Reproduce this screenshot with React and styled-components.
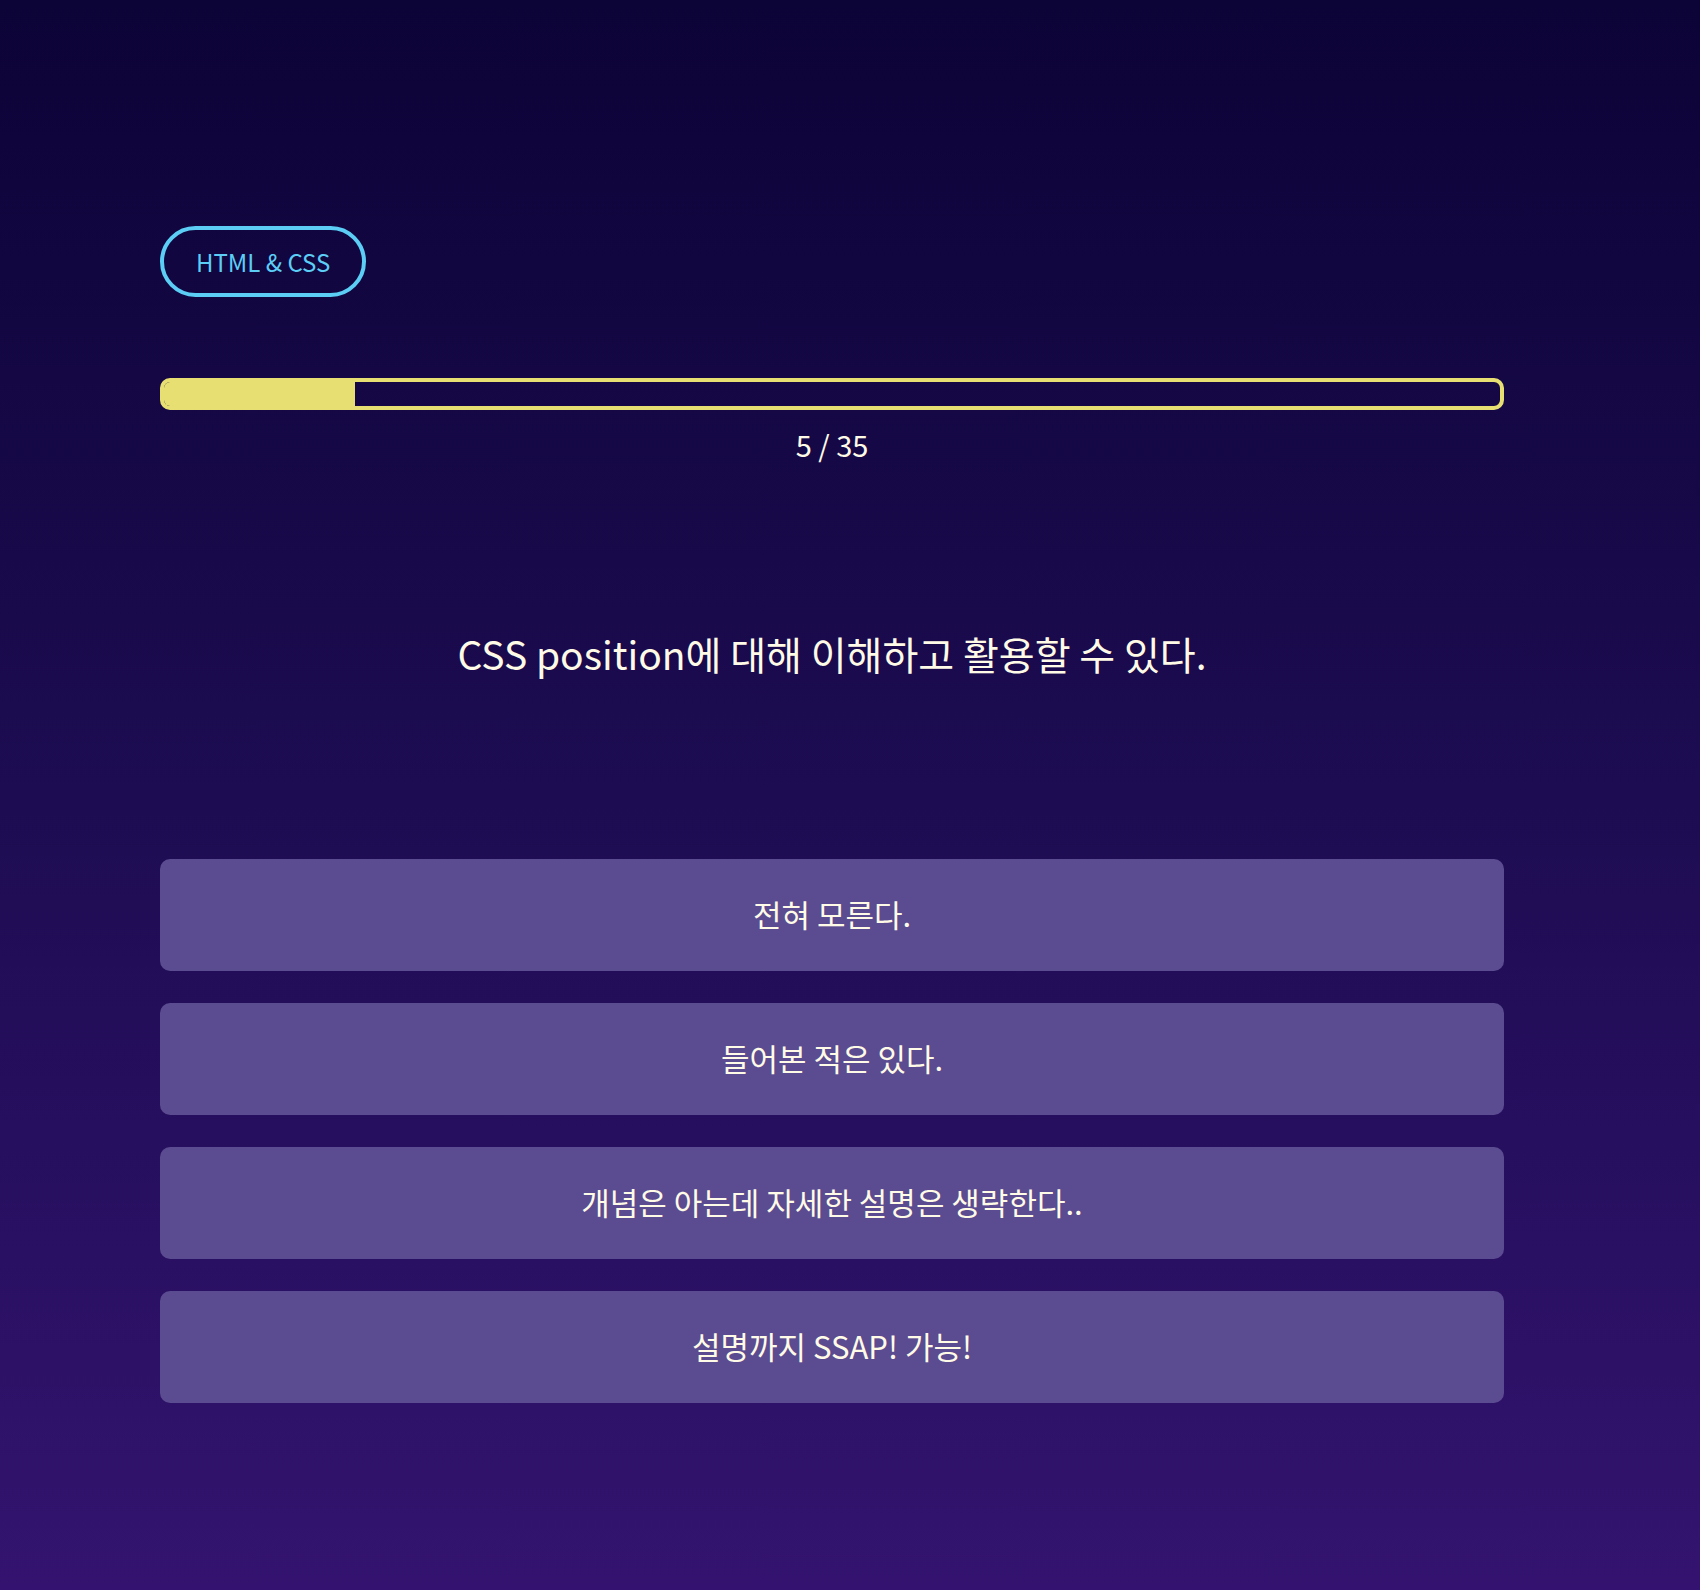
import React from "react";
import styled, { createGlobalStyle } from "styled-components";

const GlobalStyle = createGlobalStyle`
  html, body {
    margin: 0;
    padding: 0;
  }
  body {
    font-family: "Noto Sans CJK KR", "Noto Sans", sans-serif;
    background: linear-gradient(180deg, #0c0337 0%, #1d0c52 50%, #33136f 100%);
    min-height: 1590px;
  }
`;

const Page = styled.main`
  min-height: 1590px;
  box-sizing: border-box;
  padding: 226px 0 0 160px;
`;

const Content = styled.div`
  width: 1344px;
  display: flex;
  flex-direction: column;
`;

const Tag = styled.div`
  align-self: flex-start;
  box-sizing: border-box;
  height: 71px;
  padding: 0 32px;
  border: 4px solid #5ccdf5;
  border-radius: 40px;
  display: flex;
  align-items: center;
  color: #5ccdf5;
  font-size: 24px;
`;

const Progress = styled.div`
  margin-top: 81px;
  height: 32px;
  box-sizing: border-box;
  border: 4px solid #e8df72;
  border-radius: 10px;
  overflow: hidden;
`;

const Fill = styled.div`
  height: 100%;
  background: #e8df72;
`;

const Count = styled.p`
  margin: 16px 0 0;
  text-align: center;
  font-size: 29px;
  line-height: 36px;
  color: #fffbe6;
`;

const Question = styled.h2`
  margin: 166px 0 0;
  text-align: center;
  font-weight: 400;
  font-size: 39px;
  line-height: 50px;
  color: #fffbe6;
`;

const Options = styled.ul`
  list-style: none;
  margin: 181px 0 0;
  padding: 0;
  display: flex;
  flex-direction: column;
  gap: 32px;
`;

const Option = styled.li`
  height: 112px;
  box-sizing: border-box;
  padding-bottom: 4px;
  border-radius: 10px;
  background: #5b4b91;
  display: flex;
  align-items: center;
  justify-content: center;
  color: #fffbe6;
  font-size: 31px;
  cursor: pointer;
`;

const answers = [
  "전혀 모른다.",
  "들어본 적은 있다.",
  "개념은 아는데 자세한 설명은 생략한다..",
  "설명까지 SSAP! 가능!",
];

export default function App() {
  const current = 5;
  const total = 35;
  return (
    <>
      <GlobalStyle />
      <Page>
        <Content>
          <Tag>HTML &amp; CSS</Tag>
          <Progress>
            <Fill style={{ width: `${(current / total) * 100}%` }} />
          </Progress>
          <Count>
            {current} / {total}
          </Count>
          <Question>CSS position에 대해 이해하고 활용할 수 있다.</Question>
          <Options>
            {answers.map((a) => (
              <Option key={a}>{a}</Option>
            ))}
          </Options>
        </Content>
      </Page>
    </>
  );
}
